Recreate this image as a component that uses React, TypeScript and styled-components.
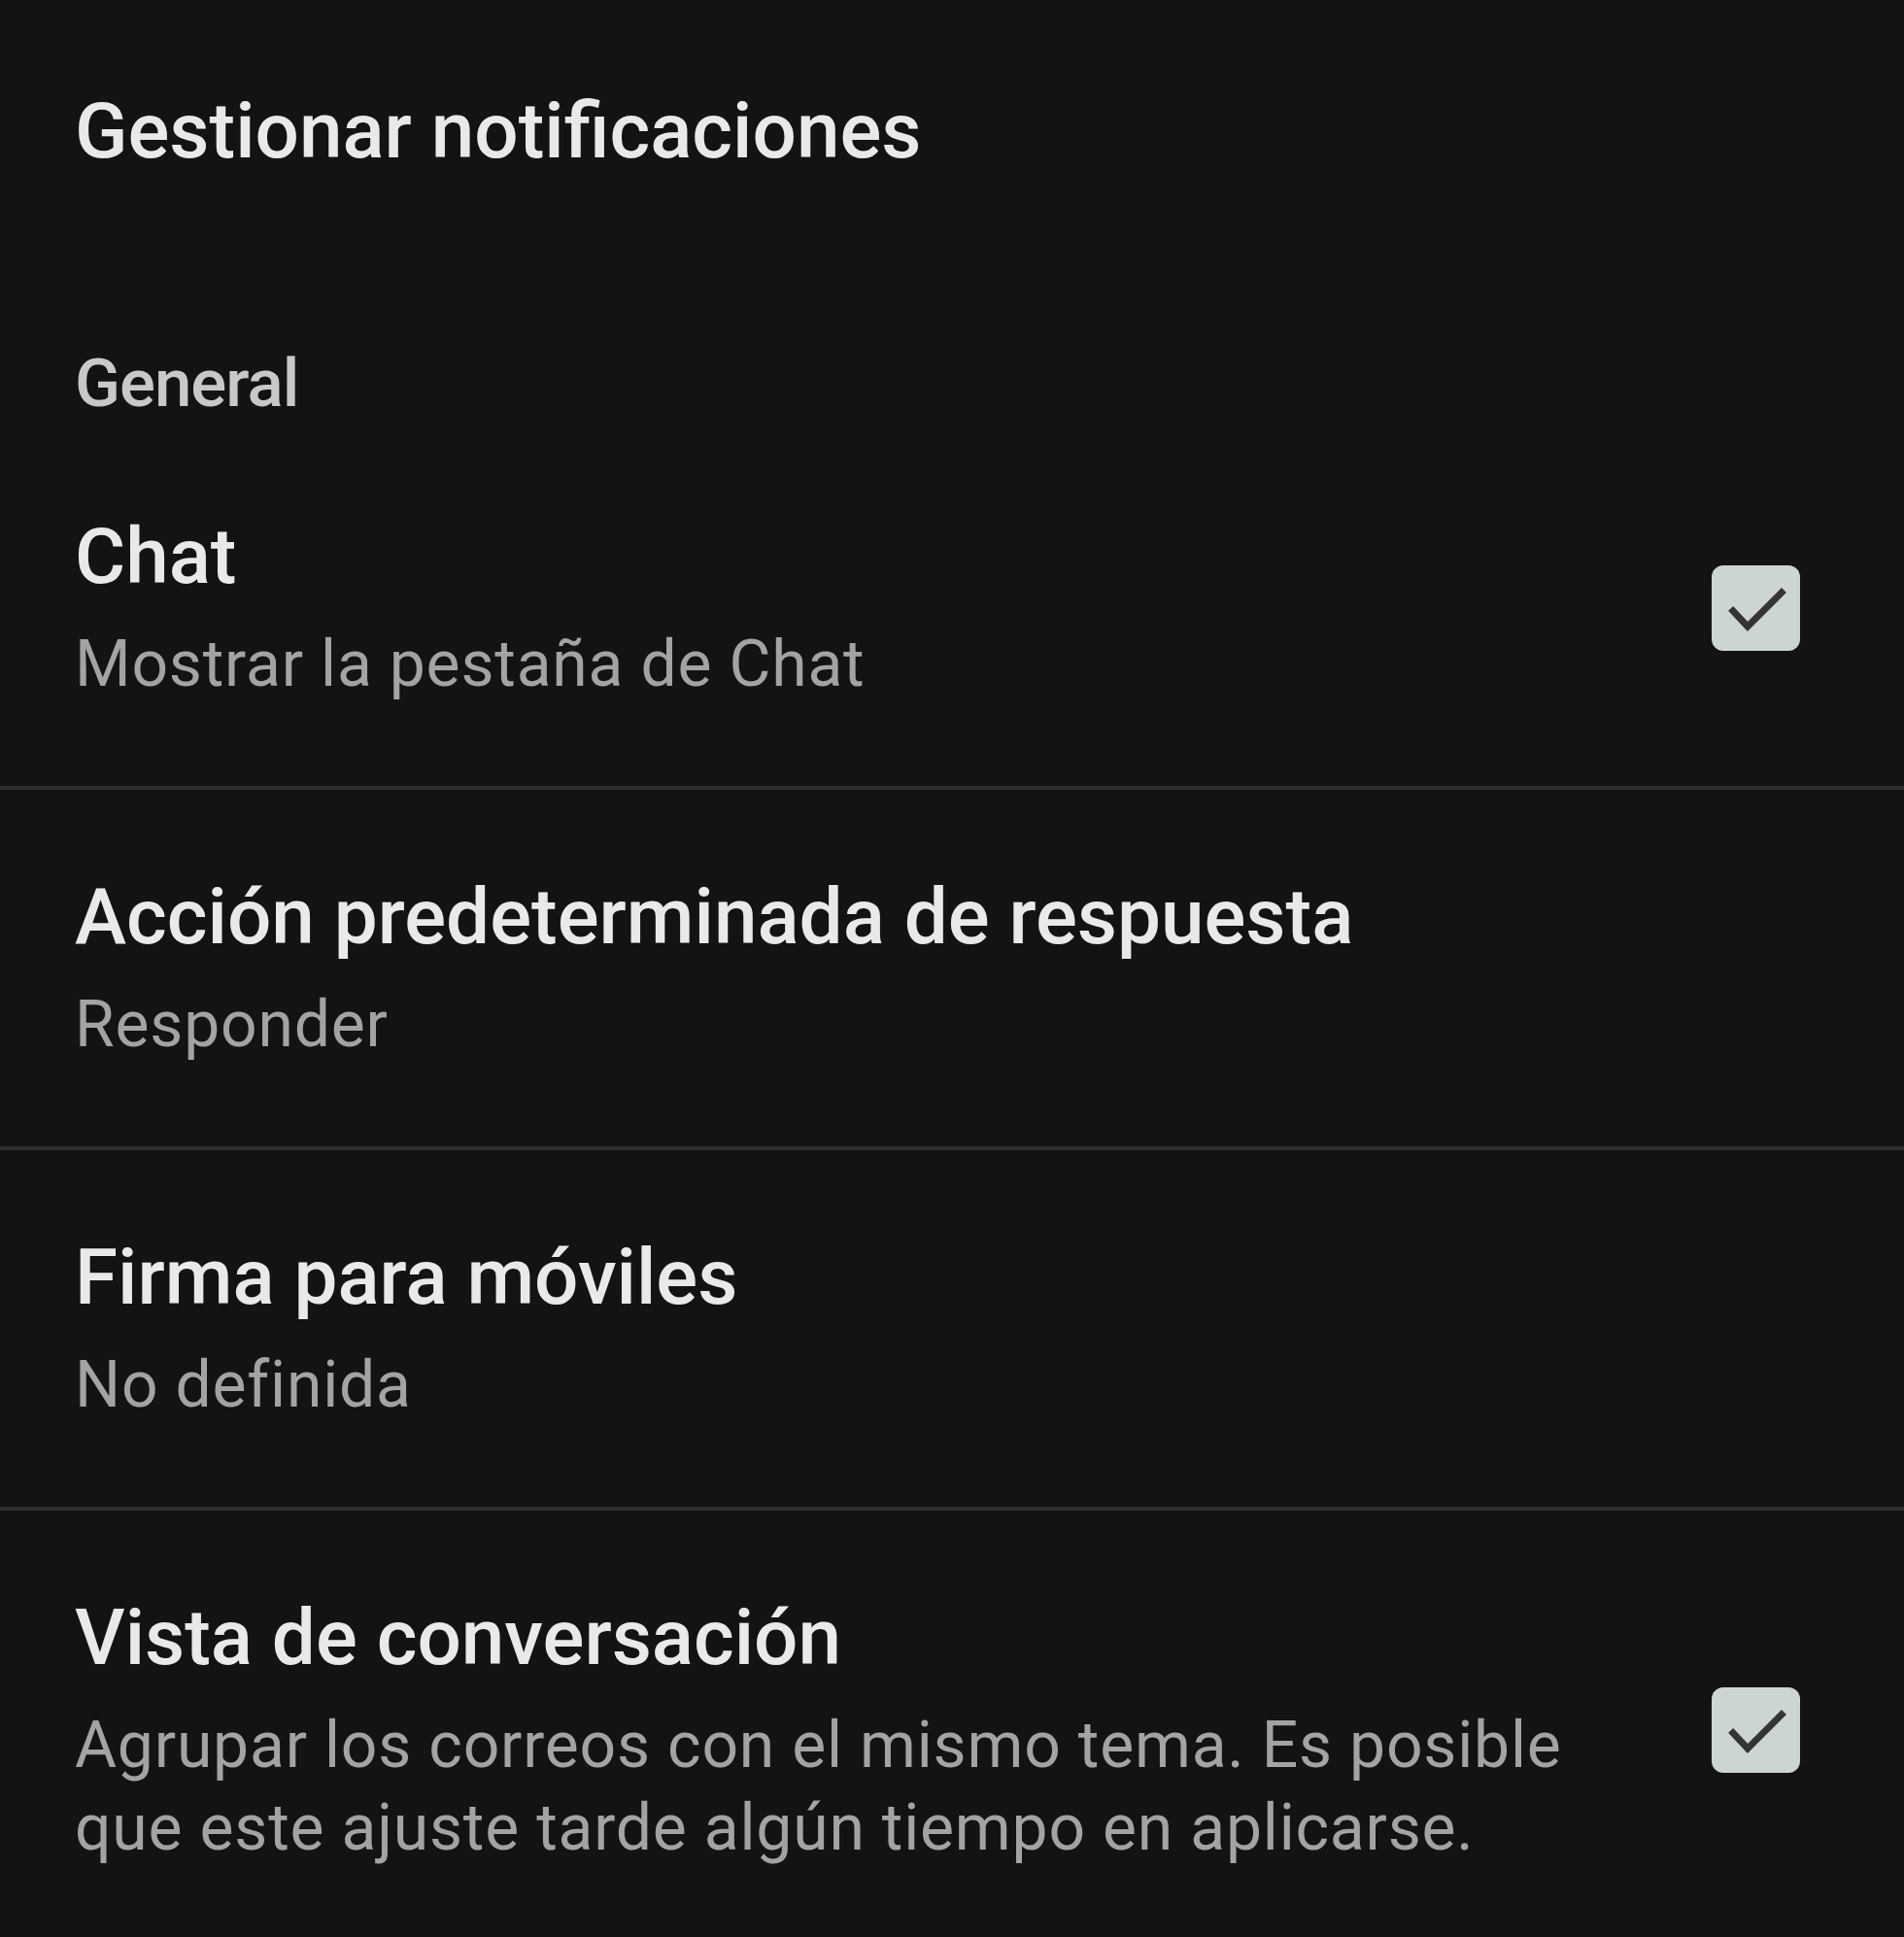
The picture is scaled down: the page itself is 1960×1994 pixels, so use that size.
import * as React from 'react'
import styled, { createGlobalStyle } from 'styled-components'

const GlobalStyle = createGlobalStyle`
  html, body {
    margin: 0;
    padding: 0;
    background: #131313;
  }
`

const colors = {
  background: '#131313',
  title: '#e9e9e9',
  subtitle: '#a3a3a3',
  section: '#c8c8c8',
  divider: '#2e2e2e',
  checkFill: '#cdd5d1',
  checkMark: '#343434',
}

const Screen = styled.main`
  width: 1960px;
  height: 1994px;
  overflow: hidden;
  background: ${colors.background};
  font-family: Roboto, 'Liberation Sans', sans-serif;
  display: flex;
  flex-direction: column;
`

const PageTitle = styled.h1`
  margin: 0;
  padding: 87px 0 0 77px;
  font-size: 80px;
  line-height: 96px;
  font-weight: 500;
  color: ${colors.title};
`

const SectionLabel = styled.h2`
  margin: 167px 0 2px;
  padding-left: 77px;
  font-size: 69px;
  line-height: 90px;
  font-weight: 500;
  letter-spacing: -1px;
  color: ${colors.section};
`

const SettingRow = styled.section<{ $divider?: boolean }>`
  display: flex;
  align-items: center;
  padding: 83px 107px 83px 77px;
  border-bottom: ${(p) => (p.$divider ? `4px solid ${colors.divider}` : 'none')};
`

const TextBlock = styled.div`
  flex: 1;
  min-width: 0;
`

const SettingTitle = styled.div`
  font-size: 80px;
  line-height: 96px;
  font-weight: 500;
  color: ${colors.title};
`

const SettingSubtitle = styled.div`
  margin-top: 20px;
  max-width: 1580px;
  font-size: 66px;
  line-height: 85px;
  font-weight: 400;
  letter-spacing: 0.8px;
  color: ${colors.subtitle};
`

const CheckBox = styled.div`
  flex: none;
  width: 91px;
  height: 88px;
  margin-left: 60px;
  border-radius: 12px;
  background: ${colors.checkFill};
  display: flex;
  align-items: center;
  justify-content: center;
`

const Check = () => (
  <CheckBox role="checkbox" aria-checked="true">
    <svg width="91" height="88" viewBox="0 0 91 88">
      <path
        d="M22 47 L37 63 L72 28"
        fill="none"
        stroke={colors.checkMark}
        strokeWidth="7"
        strokeLinecap="square"
      />
    </svg>
  </CheckBox>
)

interface Setting {
  title: string
  subtitle: string
  checked?: boolean
}

const settings: Setting[] = [
  { title: 'Chat', subtitle: 'Mostrar la pestaña de Chat', checked: true },
  { title: 'Acción predeterminada de respuesta', subtitle: 'Responder' },
  { title: 'Firma para móviles', subtitle: 'No definida' },
  {
    title: 'Vista de conversación',
    subtitle: 'Agrupar los correos con el mismo tema. Es posible que este ajuste tarde algún tiempo en aplicarse.',
    checked: true,
  },
]

const App: React.FC = () => (
  <Screen>
    <GlobalStyle />
    <PageTitle>Gestionar notificaciones</PageTitle>
    <SectionLabel>General</SectionLabel>
    {settings.map((s, i) => (
      <SettingRow key={s.title} $divider={i < settings.length - 1}>
        <TextBlock>
          <SettingTitle>{s.title}</SettingTitle>
          <SettingSubtitle>{s.subtitle}</SettingSubtitle>
        </TextBlock>
        {s.checked && <Check />}
      </SettingRow>
    ))}
  </Screen>
)

export default App
